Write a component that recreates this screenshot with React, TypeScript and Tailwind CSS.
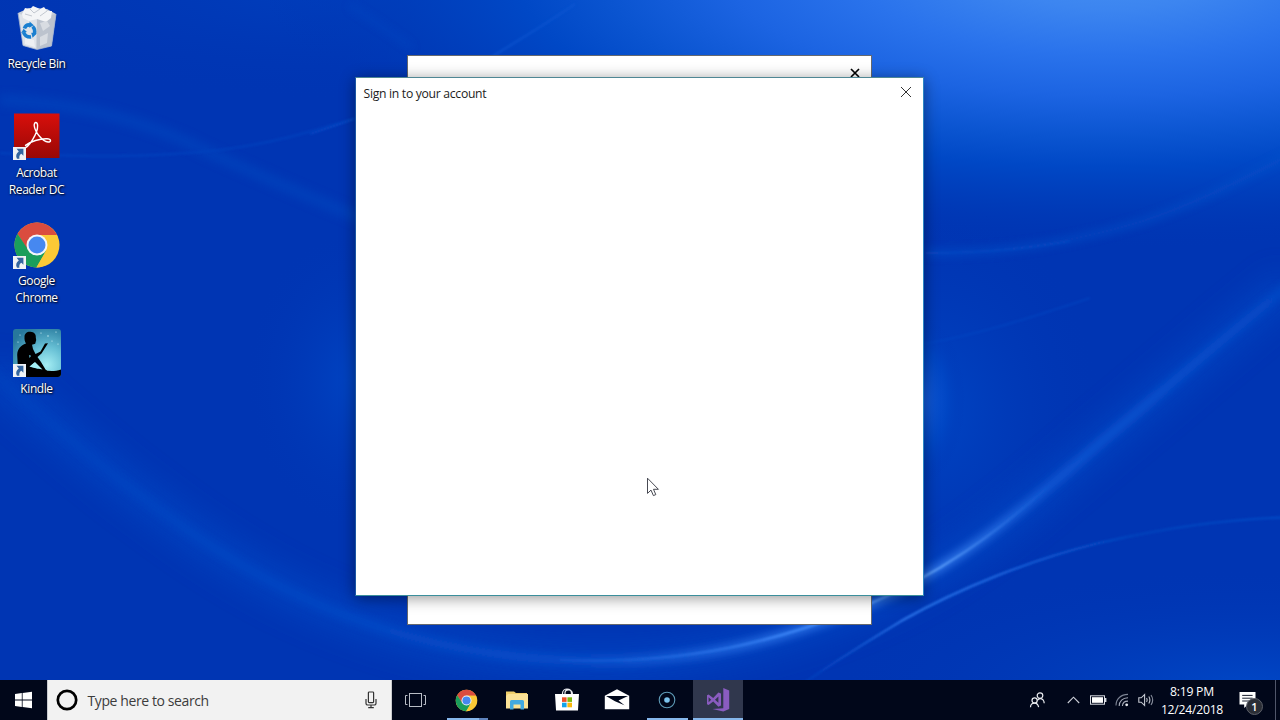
import type { ReactNode } from 'react';

function Wallpaper() {
  return (
    <svg className="absolute inset-0" width="1280" height="720" viewBox="0 0 1280 720" fill="none">
      <defs>
        <radialGradient id="sky" gradientUnits="userSpaceOnUse" cx="0" cy="0" r="1" gradientTransform="translate(1110 -30) scale(850 280)">
          <stop offset="0" stopColor="#4690f2" />
          <stop offset="0.14" stopColor="#3c85f0" />
          <stop offset="0.3" stopColor="#2a73ec" />
          <stop offset="0.45" stopColor="#1c64e2" />
          <stop offset="0.6" stopColor="#0a54d0" />
          <stop offset="0.7" stopColor="#0048c6" />
          <stop offset="0.84" stopColor="#003dba" stopOpacity="0.8" />
          <stop offset="1" stopColor="#0035b3" stopOpacity="0" />
        </radialGradient>
        <radialGradient id="halo">
          <stop offset="0" stopColor="#1a63e0" />
          <stop offset="0.6" stopColor="#0048c6" stopOpacity="0.75" />
          <stop offset="1" stopColor="#0034b2" stopOpacity="0" />
        </radialGradient>
        <radialGradient id="dim">
          <stop offset="0" stopColor="#004bca" />
          <stop offset="1" stopColor="#0036b4" stopOpacity="0" />
        </radialGradient>
        <linearGradient id="sweep" gradientUnits="userSpaceOnUse" x1="0" y1="0" x2="1280" y2="0">
          <stop offset="0" stopColor="#0042be" />
          <stop offset="0.25" stopColor="#044cc8" />
          <stop offset="0.45" stopColor="#0e58d4" />
          <stop offset="0.6" stopColor="#3c86f8" />
          <stop offset="0.74" stopColor="#4a92ff" />
          <stop offset="0.82" stopColor="#1c66e2" />
          <stop offset="1" stopColor="#0650cc" />
        </linearGradient>
        <linearGradient id="edge" gradientUnits="userSpaceOnUse" x1="560" y1="0" x2="1060" y2="0">
          <stop offset="0" stopColor="#1a62dc" stopOpacity="0.4" />
          <stop offset="0.45" stopColor="#3c86f8" />
          <stop offset="0.75" stopColor="#66a8ff" />
          <stop offset="1" stopColor="#1c66e2" stopOpacity="0" />
        </linearGradient>
        <linearGradient id="sweep2" gradientUnits="userSpaceOnUse" x1="800" y1="0" x2="1280" y2="0">
          <stop offset="0" stopColor="#0a52ce" stopOpacity="0.2" />
          <stop offset="0.22" stopColor="#2b74ea" />
          <stop offset="0.45" stopColor="#1a62dc" />
          <stop offset="0.7" stopColor="#0042bc" />
          <stop offset="1" stopColor="#064ac6" />
        </linearGradient>
        <filter id="b1" x="-20%" y="-20%" width="140%" height="140%"><feGaussianBlur stdDeviation="1" /></filter>
        <filter id="b4" x="-20%" y="-20%" width="140%" height="140%"><feGaussianBlur stdDeviation="4" /></filter>
        <filter id="b14" x="-20%" y="-20%" width="140%" height="140%"><feGaussianBlur stdDeviation="14" /></filter>
      </defs>
      <rect width="1280" height="720" fill="#0035b3" />
      <ellipse cx="380" cy="-10" rx="480" ry="110" fill="url(#dim)" opacity="0.5" />
      <rect width="1280" height="260" fill="url(#sky)" />
      <ellipse cx="930" cy="410" rx="170" ry="210" fill="url(#dim)" opacity="0.75" />
      <ellipse cx="921" cy="400" rx="44" ry="84" fill="url(#halo)" opacity="0.8" />
      <ellipse cx="356" cy="380" rx="110" ry="150" fill="url(#dim)" opacity="0.7" />
      <ellipse cx="1250" cy="690" rx="420" ry="120" fill="url(#dim)" opacity="0.85" />

      <path d="M-10 370C40 415 70 440 117 478C180 526 230 562 293 593C380 635 480 661 600 661C700 661 780 640 860 608C960 568 1040 494 1107 437C1165 390 1220 340 1290 285" stroke="#0046c4" strokeWidth="34" filter="url(#b14)" opacity="0.65" />
      <path d="M-10 370C40 415 70 440 117 478C180 526 230 562 293 593C380 635 480 661 600 661C700 661 780 640 860 608C960 568 1040 494 1107 437C1165 390 1220 340 1290 285" stroke="url(#sweep)" strokeWidth="8" filter="url(#b4)" opacity="0.7" />
      <path d="M560 660C690 665 780 640 860 608C940 575 1000 530 1050 485" stroke="url(#edge)" strokeWidth="2" filter="url(#b1)" />
      <path d="M800 686C830 664 870 640 903 620C960 588 1030 560 1099 543C1170 527 1220 520 1290 517" stroke="url(#sweep2)" strokeWidth="2.2" filter="url(#b1)" />

      <path d="M926 253C1000 254 1070 243 1140 222C1200 202 1240 180 1290 155" stroke="#0a52cc" strokeWidth="6" filter="url(#b4)" opacity="0.6" />
      <path d="M926 253C990 253 1030 248 1070 241" stroke="#084cc6" strokeWidth="2" filter="url(#b1)" opacity="0.7" />
      <path d="M924 344C980 334 1030 318 1090 298" stroke="#0448c4" strokeWidth="2" filter="url(#b1)" opacity="0.5" />
      <path d="M0 100C80 103 150 122 210 153C270 180 310 198 370 222" stroke="#0044be" strokeWidth="12" filter="url(#b4)" opacity="0.6" />
      <path d="M0 153C80 157 150 158 220 150C270 144 310 132 356 118" stroke="#0042be" strokeWidth="2.5" filter="url(#b1)" opacity="0.7" />
      <path d="M310 134C326 129 340 124 354 119" stroke="#0c50cc" strokeWidth="1.8" filter="url(#b1)" opacity="0.7" />
      <path d="M350 6C370 18 390 32 412 48" stroke="#0846c2" strokeWidth="4" filter="url(#b4)" opacity="0.7" />
      <path d="M490 58C515 42 540 28 575 4" stroke="#1058d4" strokeWidth="3" filter="url(#b1)" opacity="0.45" />
    </svg>
  );
}

function ShortcutBadge() {
  return (
    <svg className="absolute bottom-0 left-0" width="13" height="13" viewBox="0 0 13 13">
      <rect width="13" height="13" fill="#f0f2f5" />
      <path d="M3.6 1.8H10.4V8.8L8.4 6.8C6.6 7.8 6 9.4 6.4 11.8H4C2.4 8.8 3.2 6.4 5.8 4.4Z" fill="#33659f" />
    </svg>
  );
}

function RecycleBinIcon() {
  return (
    <svg width="48" height="48" viewBox="0 0 48 48">
      <path d="M5 9L16 4L34 5L43 10L38.5 42L24 45.5L10 41.5Z" fill="#c9d0da" />
      <path d="M6 10L24 13.5L23.5 45L10 41.5Z" fill="#dfe3e9" />
      <path d="M24 13.5L43 10L38.5 42L23.5 45Z" fill="#bcc3ce" />
      <path d="M9 10L12 4L17 5L20 2L27 5L31 3L34 7L39 7L38 14L33 18L24 15L16 17L10 14Z" fill="#f4f5f7" />
      <path d="M17 5L21 9L27 5M27 12L34 7M12 10L19 12" stroke="#c3c8d0" fill="none" />
      <path d="M27 19L34 17L37 22L30 27ZM27 33L35 29L34 39L27 42Z" fill="#d8dce2" />
      <path d="M12 33L21 36L22 43L12 40Z" fill="#eef0f3" />
      <path d="M5 9L10 41.5L24 45.5L38.5 42L43 10" stroke="#a2b3d2" strokeWidth="0.8" fill="none" />
      <g fill="none" stroke="#1a7fd0" strokeWidth="3.6">
        <path d="M11.4 24.5C12.4 21.5 14.4 20.4 17.6 21" />
        <path d="M19.6 22.5C21.8 24.5 22.2 27 21.2 30" />
        <path d="M18.1 33C14.4 33.2 11.6 31.5 10.6 28.2" />
      </g>
      <path d="M16.6 17.6L20.8 21.2L16.2 23.8ZM23.8 29.6L19.6 33.8L18.2 28.8ZM8.2 29L10.6 24.8L14 28Z" fill="#1a7fd0" />
    </svg>
  );
}

function AcrobatIcon() {
  return (
    <svg width="48" height="48" viewBox="0 0 48 48">
      <defs>
        <linearGradient id="acro" x1="0" y1="0" x2="0" y2="1">
          <stop offset="0" stopColor="#d80f0b" />
          <stop offset="1" stopColor="#990806" />
        </linearGradient>
      </defs>
      <rect x="1" y="1.5" width="45.5" height="44.5" fill="url(#acro)" />
      <path
        d="M11 36C15.5 36 25 21 24.6 13.5C24.4 9.4 21 9.6 21.2 13.5C21.8 20 29.5 29.5 35 30C38.6 30.2 38.4 27 34 26.8C27 26.5 17.5 29.5 12.5 33.4"
        fill="none"
        stroke="#fff"
        strokeWidth="1.4"
        strokeLinecap="round"
      />
    </svg>
  );
}

function ChromeIcon({ size }: { size: number }) {
  return (
    <svg width={size} height={size} viewBox="0 0 48 48">
      <circle cx="24" cy="24" r="22.5" fill="#fbc936" />
      <path d="M4.5 12.8A22.5 22.5 0 0 1 43.4 12.8L44 14H24L14.5 29Z" fill="#da4c3f" />
      <path d="M4.5 12.8A22.5 22.5 0 0 0 23.4 46.5L33 30L24 33L15 28.5Z" fill="#1a9e5c" />
      <path d="M24 14H44C49 29 40 46 23.4 46.5L33.2 29.6Z" fill="#fbc936" />
      <circle cx="24" cy="24" r="10.5" fill="#f4f6f8" />
      <circle cx="24" cy="24" r="8.5" fill="#4688f0" />
    </svg>
  );
}

function KindleIcon() {
  return (
    <svg width="48" height="48" viewBox="0 0 48 48">
      <defs>
        <radialGradient id="kin" cx="0.7" cy="0.75" r="0.85">
          <stop offset="0" stopColor="#a5eef4" />
          <stop offset="0.45" stopColor="#66bfd4" />
          <stop offset="1" stopColor="#27789c" />
        </radialGradient>
        <clipPath id="kinClip"><rect width="48" height="48" rx="3" /></clipPath>
      </defs>
      <g clipPath="url(#kinClip)">
        <rect width="48" height="48" fill="url(#kin)" />
        <g fill="#d5f5fa">
          <circle cx="7" cy="6" r="0.6" /><circle cx="28" cy="4" r="0.6" /><circle cx="35" cy="7" r="0.7" />
          <circle cx="43" cy="3" r="0.6" /><circle cx="39" cy="12" r="0.6" /><circle cx="45" cy="15" r="0.6" /><circle cx="5" cy="13" r="0.6" />
        </g>
        <path d="M0 38C8 37 16 37 22 39C31 41 38 44 48 40.5V48H0Z" />
        <path d="M11.5 8C11.5 4.5 14 2.5 17.5 2.8C21 3 23.2 5.2 22.8 8.5L23.2 11L22.2 14.8L19 15.8L20 20L22.5 25L27.5 22.5L32 14.5L35 14.2L28.5 24.5L24.5 28L28 33L32.5 40.5L36 43.5H28L21.5 33.5L15.5 39L12 42L5 41L4.2 26C4.4 20 7.5 16.5 13 14.5C11.8 12.8 11.3 10.5 11.5 8Z" />
        <path d="M16.5 37.5L22 33L29.5 40.5L22 39Z" fill="#a5eef4" />
        <path d="M16 26L18.2 26.8L16.5 29Z" fill="#5aafc6" />
      </g>
    </svg>
  );
}

interface DesktopItem {
  id: string;
  lines: string[];
  icon: ReactNode;
  shortcut: boolean;
}

const desktopItems: DesktopItem[] = [
  { id: 'bin', lines: ['Recycle Bin'], icon: <RecycleBinIcon />, shortcut: false },
  { id: 'acrobat', lines: ['Acrobat', 'Reader DC'], icon: <AcrobatIcon />, shortcut: true },
  { id: 'chrome', lines: ['Google', 'Chrome'], icon: <ChromeIcon size={48} />, shortcut: true },
  { id: 'kindle', lines: ['Kindle'], icon: <KindleIcon />, shortcut: true },
];

function DesktopIcons() {
  return (
    <div className="relative flex w-[73px] flex-col pt-[4px]">
      {desktopItems.map((item) => (
        <div key={item.id} className="flex h-[108.3px] flex-col items-center">
          <div className="relative h-12 w-12">
            {item.icon}
            {item.shortcut && <ShortcutBadge />}
          </div>
          <div className="mt-[3.4px] text-center text-[12px] leading-[17px] tracking-[-0.43px] whitespace-nowrap text-white [text-shadow:1px_1px_2px_rgba(0,0,0,0.95),0_0_2px_rgba(0,0,0,0.5)]">
            {item.lines.map((l) => (
              <div key={l}>{l}</div>
            ))}
          </div>
        </div>
      ))}
    </div>
  );
}

function FolderIcon() {
  return (
    <svg className="ml-[1px]" width="24" height="24" viewBox="0 0 24 24">
      <path d="M1 3.5H9L11 5H22V20H1Z" fill="#f0cf6b" />
      <path d="M3 6H23V20.5H1V8Z" fill="#fbe296" />
      <path d="M5 21.5V13.5Q5 12 6.5 12H17.5Q19 12 19 13.5V21.5H15.5V16.5H8.5V21.5Z" fill="#42a9e0" />
    </svg>
  );
}

function StoreIcon() {
  return (
    <svg width="26" height="26" viewBox="0 0 26 26">
      <path d="M8.5 8V6.5C8.5 0.5 17.5 0.5 17.5 6.5V8M11 8V5.5C11.5 2 18 1.5 18.5 7" fill="none" stroke="#e9ebef" strokeWidth="1.2" />
      <path d="M1 7H25L24 23.5H2Z" fill="#fff" />
      <rect x="8" y="10.3" width="4.6" height="4.6" fill="#ee5028" />
      <rect x="13.4" y="10.3" width="4.6" height="4.6" fill="#7db90c" />
      <rect x="8" y="15.7" width="4.6" height="4.6" fill="#12a3ea" />
      <rect x="13.4" y="15.7" width="4.6" height="4.6" fill="#fbb80b" />
    </svg>
  );
}

function MailIcon() {
  return (
    <svg width="26" height="24" viewBox="0 0 26 24">
      <path d="M0.8 7.8L13 1.2L25.2 7.8V21.2H0.8Z" fill="#fff" />
      <path d="M2 8H24L14.5 12.4L20.5 17.2L11 13.2Z" fill="#01081b" />
    </svg>
  );
}

function VisualStudioIcon() {
  return (
    <svg className="ml-[1px]" width="24" height="26" viewBox="0 0 24 26">
      <path d="M17.3 1L23.2 3.4V22L17.3 24.4L6.5 22L17.3 21.2Z" fill="#8a5cc0" />
      <path fillRule="evenodd" d="M1 8.2L2.6 7.4L7.2 11L12.4 5.4L15 6.6V18.6L12.4 19.8L7.2 14.4L2.6 18L1 17.2ZM2.6 10.2V15.2L5.2 12.7ZM12.4 9.6L9 12.7L12.4 15.8Z" fill="#8a5cc0" />
    </svg>
  );
}

const taskButtons: { id: string; icon: ReactNode; line?: string; active?: boolean }[] = [
  {
    id: 'taskview',
    icon: (
      <svg width="22" height="16" viewBox="0 0 22 16" fill="none" stroke="#b9bdc6" strokeWidth="1">
        <rect x="4.5" y="1.5" width="12" height="13" />
        <path d="M2.5 3.5H0.5V12.5H2.5M18.5 3.5H20.5V12.5H18.5" />
      </svg>
    ),
  },
  { id: 'chrome', icon: <ChromeIcon size={23} />, line: 'split' },
  { id: 'files', icon: <FolderIcon /> },
  { id: 'store', icon: <StoreIcon /> },
  { id: 'mail', icon: <MailIcon /> },
  {
    id: 'recorder',
    icon: (
      <svg width="18" height="18" viewBox="0 0 18 18">
        <circle cx="9" cy="9" r="7.8" fill="none" stroke="#5f9cb8" strokeWidth="1.1" />
        <circle cx="9" cy="9" r="2.8" fill="#7cc4ee" />
      </svg>
    ),
    line: 'full',
  },
  { id: 'vs', icon: <VisualStudioIcon />, line: 'wide', active: true },
];

function Taskbar() {
  return (
    <div className="relative flex h-10 w-full bg-[#01071a]">
      <div className="flex w-[47px] items-center justify-center">
        <svg width="18" height="18" viewBox="0 0 18 18" fill="#fff">
          <path d="M0 3L6.8 2V8.6H0ZM7.6 1.9L17 0.7V8.6H7.6ZM0 9.4H6.8V16L0 15ZM7.6 9.4H17V17.3L7.6 16.1Z" />
        </svg>
      </div>
      <div className="flex w-[345px] items-center border-x border-[#c9cbd0] bg-[#f2f2f2] pr-[14px] pl-[8px]">
        <svg width="22" height="22" viewBox="0 0 22 22">
          <circle cx="11" cy="11" r="9.2" fill="none" stroke="#000" strokeWidth="2.7" />
        </svg>
        <span className="ml-[9.5px] flex-1 pt-[2px] text-[14px] leading-5 tracking-[-0.4px] text-[#3c3c3c]">Type here to search</span>
        <svg width="12" height="18" viewBox="0 0 12 18" fill="none" stroke="#333" strokeWidth="1.2">
          <rect x="3.4" y="1" width="5.2" height="10.6" rx="0.8" />
          <path d="M1 8V12.2Q1 14 3 14H9Q11 14 11 12.2V8M6 14V16.5M3.2 16.6H8.8" />
        </svg>
      </div>
      <div className="flex">
        {taskButtons.map((b) => (
          <div
            key={b.id}
            className={`relative flex w-[50.2px] items-center justify-center pr-[1.5px] ${b.active ? 'bg-[#30374d]' : ''}`}
          >
            {b.icon}
            {b.line === 'split' && (
              <div className="absolute bottom-0 left-[5px] flex h-[2px] w-[41px] bg-[#5e83bd]">
                <div className="w-[32px] bg-[#86b7ec]" />
              </div>
            )}
            {b.line === 'full' && <div className="absolute bottom-0 left-[4px] h-[2px] w-[41px] bg-[#86b7ec]" />}
            {b.line === 'wide' && <div className="absolute bottom-0 left-0 h-[2px] w-full bg-[#86b7ec]" />}
          </div>
        ))}
      </div>
      <div className="ml-auto flex items-center text-white">
        <svg className="mr-[21px]" width="17" height="18" viewBox="0 0 17 18" fill="none" stroke="#eceef2" strokeWidth="1.2">
          <circle cx="11" cy="4.6" r="2.8" />
          <path d="M8.3 9.4Q11 6.2 14 8.8Q15.2 10 15.2 12.2" />
          <circle cx="5.6" cy="9.4" r="2.6" />
          <path d="M1.5 16.2Q1.6 12 5.6 12.1Q9 12.2 9.6 16.2" />
        </svg>
        <svg className="mr-[10px]" width="13" height="8" viewBox="0 0 13 8" fill="none" stroke="#cdd0d8" strokeWidth="1.1">
          <path d="M0.8 7L6.5 1.2L12.2 7" />
        </svg>
        <svg className="mr-[8px]" width="17" height="10" viewBox="0 0 17 10">
          <rect x="0.5" y="0.8" width="14" height="8.4" fill="none" stroke="#d8dbe2" />
          <rect x="2" y="2.2" width="11" height="5.6" fill="#fff" />
          <rect x="15" y="3" width="1.4" height="4" fill="#d8dbe2" />
        </svg>
        <svg className="mr-[8px]" width="15" height="14" viewBox="0 0 15 14" fill="none" stroke="#a6abb8" strokeWidth="1.1">
          <path d="M1 12.5C1 6 6 1.4 13 1.4" stroke="#7d8494" />
          <path d="M4.2 13C4.2 8.4 7.6 4.8 13 4.8" />
          <path d="M7.4 13C7.6 10.2 9.6 8.1 13 8.1" />
          <circle cx="11.7" cy="11.8" r="1.4" fill="#e6e8ee" stroke="none" />
        </svg>
        <svg className="mr-[7px]" width="16" height="14" viewBox="0 0 16 14" fill="none" stroke="#c3c7d0" strokeWidth="1.1">
          <path d="M0.8 4.8H3.2L6.6 1.6V12.4L3.2 9.2H0.8Z" />
          <path d="M8.6 5Q9.8 7 8.6 9M10.8 3.5Q13 7 10.8 10.5" />
          <path d="M13 2Q16.4 7 13 12" stroke="#858b9a" />
        </svg>
        <div className="flex w-[62px] flex-col items-center pt-[2px] text-[12.2px] leading-[18.4px] tracking-[-0.25px] whitespace-nowrap">
          <span>8:19 PM</span>
          <span>12/24/2018</span>
        </div>
        <div className="relative ml-[16px] h-[18px] w-[18px]">
          <svg width="17" height="18" viewBox="0 0 17 18">
            <path d="M0.5 1H16.5V13.5H9L5.2 17V13.5H0.5Z" fill="#fff" />
            <path d="M3.2 4.4H13.6M3.2 7.2H13.6M3.2 10H10" stroke="#1a2030" strokeWidth="1" />
          </svg>
          <div className="absolute top-[7px] left-[7px] flex h-[17px] w-[17px] items-center justify-center rounded-full border border-[#5c5f68] bg-[#2b2e36] text-[11px] leading-none font-semibold">
            1
          </div>
        </div>
        <div className="ml-[18px] h-10 w-[5px] border-l border-[#50566a]" />
      </div>
    </div>
  );
}

function SignInDialog() {
  return (
    <div className="absolute top-[77px] left-[355px] flex h-[519px] w-[569px] flex-col border border-t-[#4f8794] border-r-[#2c86c4] border-b-[#3a8f9c] border-l-[#1a56a4] bg-white shadow-[0_2px_14px_rgba(0,0,0,0.42)]">
      <div className="flex h-[30px] items-center justify-between pr-[10px] pl-[7.5px]">
        <span className="pt-[2px] text-[12.2px] leading-none tracking-[-0.3px] text-[#1c1c1c]">Sign in to your account</span>
        <svg className="mr-[1px] mb-[2px]" width="12" height="12" viewBox="0 0 12 12" stroke="#333" strokeWidth="1">
          <path d="M1 1L11 11M11 1L1 11" />
        </svg>
      </div>
    </div>
  );
}

export default function App() {
  return (
    <div className="relative flex h-[720px] w-[1280px] flex-col justify-between overflow-hidden bg-[#0035b3] font-['Open_Sans','Noto_Sans',sans-serif]">
      <Wallpaper />
      <DesktopIcons />

      <div className="absolute top-[55px] left-[407px] flex h-[570px] w-[465px] items-start justify-end border border-[#66696e] bg-white pt-[12px] pr-[11px]">
        <svg width="10" height="10" viewBox="0 0 10 10" stroke="#000" strokeWidth="1.7">
          <path d="M1 1L9 9M9 1L1 9" />
        </svg>
      </div>
      <SignInDialog />

      <svg className="absolute top-[477px] left-[646px]" width="15" height="20" viewBox="0 0 15 20">
        <path d="M1.5 1.2V16.4L5 13.1L7.4 18.6L9.8 17.6L7.5 12.3H12.4Z" fill="#fff" stroke="#33363f" strokeWidth="0.9" />
      </svg>

      <Taskbar />
    </div>
  );
}
